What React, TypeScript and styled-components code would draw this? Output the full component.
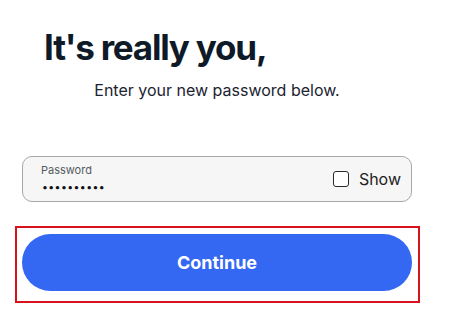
import React from "react";
import styled, { createGlobalStyle } from "styled-components";

const Global = createGlobalStyle`
  html, body { margin: 0; padding: 0; background: #ffffff; }
  body { font-family: Inter, "Noto Sans", Arial, sans-serif; }
`;

const Page = styled.main`
  width: 450px;
  height: 324px;
  box-sizing: border-box;
  padding: 26px 0 0 15px;
  display: flex;
  flex-direction: column;
`;

const Column = styled.div`
  width: 405px;
  display: flex;
  flex-direction: column;
`;

const Heading = styled.h1`
  margin: 0 0 0 29px;
  font-size: 35px;
  line-height: 42px;
  font-weight: 700;
  letter-spacing: -1.2px;
  color: #0e1a28;
`;

const Subtitle = styled.p`
  margin: 12px 0 0 7px;
  width: 390px;
  text-align: center;
  font-size: 16px;
  line-height: 20px;
  color: #1c2330;
`;

const Field = styled.label`
  margin: 56px 0 0 7px;
  width: 390px;
  height: 46px;
  box-sizing: border-box;
  border: 1px solid #a8a8a8;
  border-radius: 10px;
  background: #f6f6f6;
  display: flex;
  align-items: center;
  padding: 0 10px 0 18px;
`;

const FieldText = styled.div`
  flex: 1;
  display: flex;
  flex-direction: column;
`;

const FieldLabel = styled.span`
  font-size: 11px;
  line-height: 13px;
  color: #555b63;
`;

const PasswordInput = styled.input`
  border: none;
  outline: none;
  background: transparent;
  padding: 0;
  margin: 4px 0 0 1px;
  font-family: Inter, Arial, sans-serif;
  font-size: 10.5px;
  line-height: 14px;
  letter-spacing: 0.4px;
  color: #111;
  width: 200px;
`;

const ShowToggle = styled.span`
  display: flex;
  align-items: center;
  gap: 10px;
  font-size: 16px;
  color: #222;
`;

const Box = styled.span`
  width: 16px;
  height: 16px;
  box-sizing: border-box;
  border: 1.5px solid #2a2a2a;
  border-radius: 3px;
  background: #fff;
`;

const Highlight = styled.div`
  margin-top: 24px;
  width: 405px;
  height: 77px;
  box-sizing: border-box;
  border: 2px solid #d8121b;
  padding: 6px 0 0 5px;
`;

const ContinueButton = styled.button`
  width: 390px;
  height: 57px;
  border: none;
  border-radius: 29px;
  background: #3467f2;
  color: #ffffff;
  font-family: Inter, Arial, sans-serif;
  font-size: 18px;
  font-weight: 700;
  cursor: pointer;
`;

export default function App() {
  return (
    <>
      <Global />
      <Page>
        <Column>
          <Heading>It's really you,</Heading>
          <Subtitle>Enter your new password below.</Subtitle>
          <Field>
            <FieldText>
              <FieldLabel>Password</FieldLabel>
              <PasswordInput type="password" defaultValue="abcdefghij" readOnly />
            </FieldText>
            <ShowToggle>
              <Box />
              Show
            </ShowToggle>
          </Field>
          <Highlight>
            <ContinueButton>Continue</ContinueButton>
          </Highlight>
        </Column>
      </Page>
    </>
  );
}
